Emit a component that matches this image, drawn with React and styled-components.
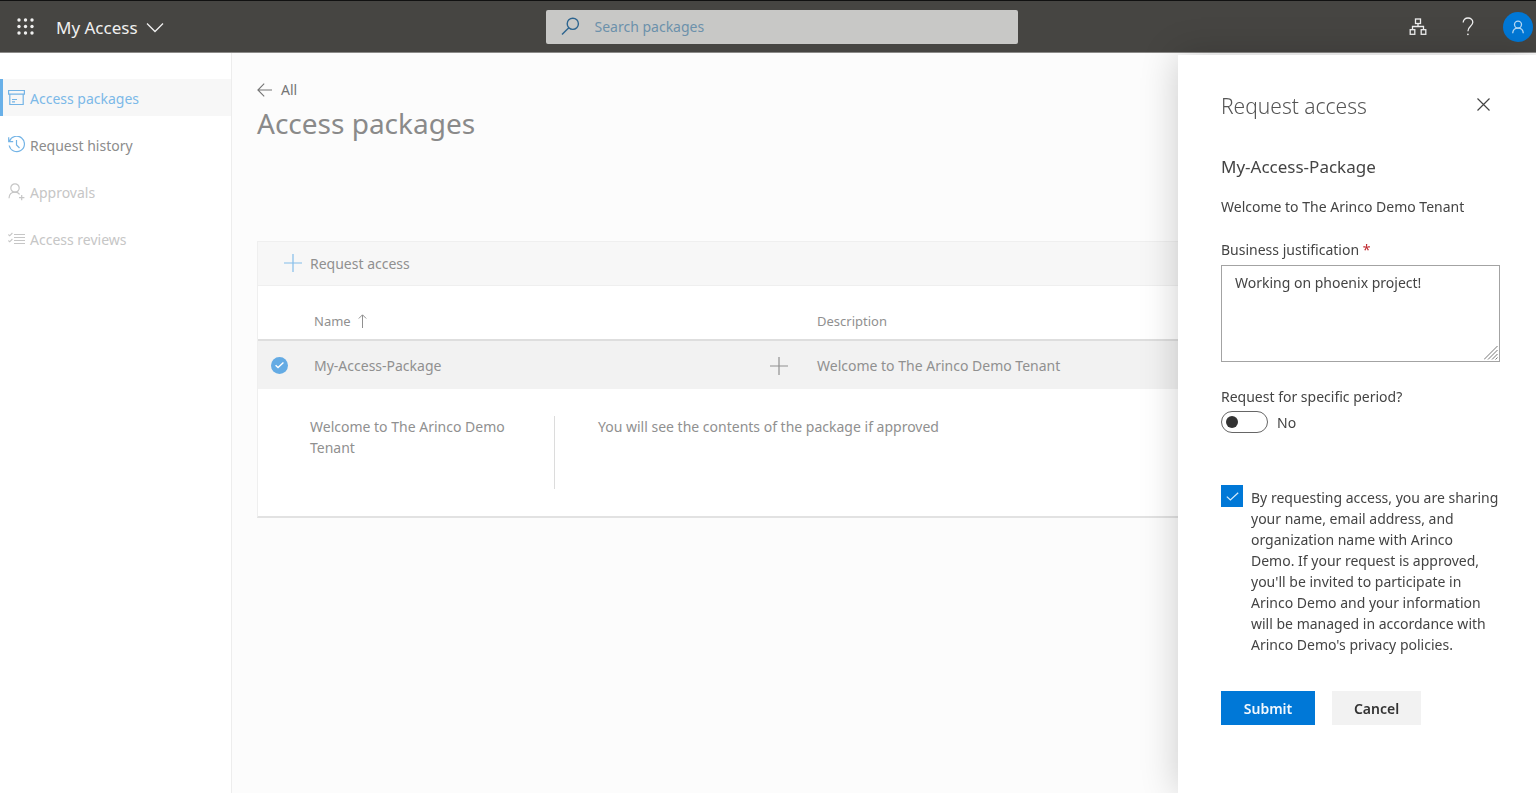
import React from "react";
import styled, { createGlobalStyle } from "styled-components";

const GlobalStyle = createGlobalStyle`
  *, *::before, *::after { box-sizing: border-box; }
  body {
    margin: 0;
    background: #fcfcfc;
    color: #444;
    font-family: "Noto Sans", "Open Sans", sans-serif;
    font-size: 14px;
    line-height: 21px;
  }
  button, input, textarea { font: inherit; color: inherit; }
  button { border: 0; padding: 0; background: none; cursor: pointer; }
  h1, h2, h3, p { margin: 0; font-weight: 400; }
  svg { display: block; fill: none; stroke: currentColor; flex: none; }
`;

const Page = styled.div`
  display: flex;
  flex-direction: column;
  min-height: 100vh;
`;

const Header = styled.header`
  display: flex;
  align-items: center;
  height: 53px;
  background: #464542;
  border-top: 1px solid #111;
  border-bottom: 1px solid #8c8b89;
  color: #f0f0f0;
`;

const Brand = styled.div`
  flex: 1 1 30px;
  display: flex;
  align-items: center;
  gap: 22px;
  padding-left: 17px;
`;

const BrandButton = styled.button`
  display: flex;
  align-items: center;
  gap: 8px;
  padding-top: 2px;
  font-size: 17px;
  line-height: 24px;
`;

const Search = styled.label`
  display: flex;
  align-items: center;
  gap: 15px;
  width: 472px;
  height: 34px;
  padding-left: 15px;
  background: #c8c8c6;
  border-radius: 2px;
  color: #2c648f;
`;

const SearchInput = styled.input`
  flex: 1;
  min-width: 0;
  height: 100%;
  padding: 0;
  border: 0;
  outline: 0;
  background: none;
  &::placeholder { color: #6c91ab; opacity: 1; }
`;

const HeaderActions = styled.div`
  flex: 1 1 0;
  display: flex;
  align-items: center;
  justify-content: flex-end;
  padding-right: 3px;
`;

const HeaderButton = styled.button`
  display: grid;
  place-items: center;
  width: 50px;
  height: 50px;
`;

const Avatar = styled.button`
  display: grid;
  place-items: center;
  width: 30px;
  height: 30px;
  margin-left: 10px;
  border-radius: 50%;
  background: #0078d7;
  color: #b5d9f5;
`;

const Body = styled.div`
  flex: 1;
  display: flex;
`;

const Nav = styled.nav`
  flex: none;
  display: flex;
  flex-direction: column;
  gap: 10px;
  width: 232px;
  padding-top: 26px;
  background: #fff;
  border-right: 1px solid #ededed;
`;

const NavLink = styled.a`
  display: flex;
  align-items: center;
  gap: 5px;
  height: 37px;
  padding-left: 5px;
  border-left: 3px solid ${(p) => (p.$selected ? "#69b0e8" : "transparent")};
  background: ${(p) => (p.$selected ? "#f7f7f7" : "transparent")};
  color: ${(p) => (p.$selected ? "#7cb9e8" : p.$disabled ? "#c6c6c6" : "#8c8c8c")};
  text-decoration: none;
  svg { color: ${(p) => (p.$disabled ? "#c6c6c6" : "#74b4e6")}; }
`;

const NavLabel = styled.span`
  padding-top: 2px;
`;

const Main = styled.main`
  flex: 1;
  min-width: 0;
  padding: 26px 26px 0 25px;
`;

const BackLink = styled.a`
  display: inline-flex;
  align-items: center;
  gap: 9px;
  color: #757575;
  text-decoration: none;
`;

const PageTitle = styled.h1`
  padding-top: 1px;
  color: #8a8a8a;
  font-size: 28px;
  line-height: 40px;
`;

const Card = styled.section`
  margin-top: 98px;
  background: #fff;
  border: 1px solid #efefef;
  border-bottom: 2px solid #e2e2e2;
  color: #909090;
`;

const Toolbar = styled.div`
  display: flex;
  align-items: center;
  height: 44px;
  padding-left: 26px;
  background: #f7f7f7;
  border-bottom: 1px solid #efefef;
`;

const ToolbarButton = styled.button`
  display: flex;
  align-items: center;
  gap: 8px;
  svg { color: #84bdea; }
`;

const Table = styled.table`
  width: 100%;
  table-layout: fixed;
  border-collapse: collapse;
  text-align: left;
`;

const Col = styled.col`
  width: ${(p) => p.$width};
`;

const HeadCell = styled.th`
  height: 54px;
  padding: 18px 0 0;
  border-bottom: 2px solid #dedede;
  font-size: 13px;
  font-weight: 400;
`;

const SortLabel = styled.span`
  display: flex;
  align-items: center;
  gap: 7px;
`;

const Cell = styled.td`
  height: 49px;
  padding: 2px 0 0;
  background: #f2f2f2;
`;

const RowAction = styled.button`
  display: flex;
`;

const RowCheck = styled.span`
  display: grid;
  place-items: center;
  width: 17px;
  height: 17px;
  margin-left: 13px;
  border-radius: 50%;
  background: #64abe4;
  color: #fff;
`;

const DetailCell = styled.td`
  padding: 27px 0;
`;

const Detail = styled.div`
  display: flex;
`;

const DetailSummary = styled.p`
  width: 297px;
  height: 73px;
  padding-left: 52px;
  padding-right: 40px;
  border-right: 1px solid #dcdcdc;
`;

const DetailNote = styled.p`
  padding-left: 43px;
`;

const Panel = styled.aside`
  position: fixed;
  top: 55px;
  right: 0;
  bottom: 0;
  width: 358px;
  padding: 36px 36px 0 43px;
  background: #fff;
  box-shadow: 0 0 36px rgba(0, 0, 0, 0.2);
`;

const PanelHeader = styled.div`
  display: flex;
  align-items: flex-start;
  justify-content: space-between;
  padding-right: 10px;
`;

const PanelTitle = styled.h2`
  color: #555;
  font-size: 21px;
  font-weight: 300;
  line-height: 30px;
`;

const CloseButton = styled.button`
  padding: 7px 0;
`;

const PackageName = styled.h3`
  margin-top: 34px;
  font-size: 17px;
  line-height: 24px;
`;

const PackageText = styled.p`
  margin-top: 17px;
`;

const FieldLabel = styled.label`
  display: block;
  margin-top: ${(p) => p.$gap};
`;

const Required = styled.span`
  color: #c0272d;
`;

const TextAreaBox = styled.div`
  position: relative;
  margin-top: 5px;
`;

const TextArea = styled.textarea`
  display: block;
  width: 100%;
  height: 97px;
  padding: 6px 13px;
  border: 1px solid #a3a3a3;
  outline: 0;
  background: #fff;
  resize: none;
`;

const Grip = styled.svg`
  position: absolute;
  right: 2px;
  bottom: 2px;
  color: #777;
`;

const ToggleRow = styled.div`
  display: flex;
  align-items: center;
  gap: 9px;
  margin-top: 4px;
`;

const Toggle = styled.input`
  appearance: none;
  display: flex;
  align-items: center;
  width: 47px;
  height: 22px;
  margin: 0;
  padding-left: 4px;
  border: 1px solid #666;
  border-radius: 11px;
  &::before {
    content: "";
    width: 12px;
    height: 12px;
    border-radius: 50%;
    background: #333;
  }
`;

const Consent = styled.label`
  display: grid;
  grid-template-columns: 22px 1fr;
  gap: 8px;
  margin-top: 52px;
`;

const CheckHolder = styled.span`
  display: grid;
  height: 22px;
  place-items: center;
  color: #d6ebfa;
  & > * { grid-area: 1 / 1; }
  svg { z-index: 1; pointer-events: none; }
`;

const CheckInput = styled.input`
  appearance: none;
  width: 22px;
  height: 22px;
  margin: 0;
  background: #0078d7;
`;

const ConsentText = styled.span`
  padding-top: 2px;
`;

const Actions = styled.div`
  display: flex;
  gap: 17px;
  margin-top: 36px;
`;

const ActionButton = styled.button`
  width: ${(p) => (p.$primary ? "94px" : "89px")};
  height: 34px;
  background: ${(p) => (p.$primary ? "#0078d7" : "#f2f2f2")};
  color: ${(p) => (p.$primary ? "#f2f8fd" : "#333")};
  font-weight: 600;
`;

const WaffleIcon = () => (
  <svg width="17" height="17" viewBox="0 0 17 17">
    {[2, 8.5, 15].map((y) =>
      [2, 8.5, 15].map((x) => (
        <circle key={`${x}-${y}`} cx={x} cy={y} r="1.7" fill="currentColor" stroke="none" />
      ))
    )}
  </svg>
);

const ChevronIcon = () => (
  <svg width="18" height="11" viewBox="0 0 18 11" strokeWidth="1.3">
    <path d="M1 1.500 9 9.500l8-8" />
  </svg>
);

const SearchIcon = () => (
  <svg width="19" height="19" viewBox="0 0 19 19" strokeWidth="1.4">
    <circle cx="11.8" cy="6.8" r="5.6" />
    <path d="M7.8 10.8 1 17.6" />
  </svg>
);

const OrgIcon = () => (
  <svg width="18" height="18" viewBox="0 0 18 18" strokeWidth="1.3">
    <rect x="6.5" y="1" width="5" height="4.5" />
    <rect x="1.2" y="11.7" width="4.6" height="4.6" />
    <rect x="12.2" y="11.7" width="4.6" height="4.6" />
    <path d="M9 5.5v3M3.5 11.7V8.500h11v3.200" />
  </svg>
);

const HelpIcon = () => (
  <svg width="12" height="19" viewBox="0 0 12 19" strokeWidth="1.3">
    <path d="M1.2 5.500C1.2 2.700 3.200 1 6 1s4.800 1.700 4.800 4.300c0 4-4.900 4.200-4.900 9" />
    <circle cx="5.9" cy="17.3" r="0.9" fill="currentColor" stroke="none" />
  </svg>
);

const PersonIcon = () => (
  <svg width="14" height="14" viewBox="0 0 14 14" strokeWidth="1.3">
    <circle cx="7" cy="4.6" r="3.5" />
    <path d="M1.700 13.200C1.900 10 4 8.100 7 8.100s5.100 1.900 5.300 5.100" />
  </svg>
);

const PackageIcon = () => (
  <svg width="17" height="17" viewBox="0 0 17 17" strokeWidth="1.2">
    <path d="M.6 1.500h15.800v3.700H.6zM1.800 5.200v10.300h13.400V5.200M4 10.500h5M4 12.800h3" />
  </svg>
);

const HistoryIcon = () => (
  <svg width="17" height="17" viewBox="0 0 17 17" strokeWidth="1.2">
    <path d="M1.500 5.300A7.700 7.700 0 1 1 1.200 9.500M.7 1.200v4.500h4.500M8.500 4v5l3 3" />
  </svg>
);

const ApprovalIcon = () => (
  <svg width="17" height="18" viewBox="0 0 17 18" strokeWidth="1.2">
    <circle cx="7" cy="5" r="4.2" />
    <path d="M1 15.200c.2-3.700 2.500-6 6-6 2 0 3.600.8 4.600 2.200M13.700 12v5.200M11 14.600h5.400" />
  </svg>
);

const ReviewIcon = () => (
  <svg width="17" height="14" viewBox="0 0 17 14" strokeWidth="1.1">
    <path d="M6 2.500h11M6 5.500h11M6 8.500h11M6 11.500h11M.4 2.500l1.300 1.300L4.400 1M.4 8.500l1.300 1.300L4.400 7" />
  </svg>
);

const BackIcon = () => (
  <svg width="15" height="14" viewBox="0 0 15 14" strokeWidth="1.1">
    <path d="M7.200.6.9 7l6.300 6.400M1 7h14" />
  </svg>
);

const PlusIcon = () => (
  <svg width="18" height="18" viewBox="0 0 18 18" strokeWidth="1.2">
    <path d="M9 0v18M0 9h18" />
  </svg>
);

const SortIcon = () => (
  <svg width="9" height="14" viewBox="0 0 9 14">
    <path d="M4.500 14V1M.8 4.500 4.500.8l3.700 3.700" />
  </svg>
);

const CheckIcon = ({ width, stroke }) => (
  <svg width={width} viewBox="0 0 13 9" strokeWidth={stroke}>
    <path d="M.8 4.600 4.400 8 12.200.8" />
  </svg>
);

const CloseIcon = () => (
  <svg width="13" height="13" viewBox="0 0 13 13" strokeWidth="1.2">
    <path d="m.5.500 12 12m0-12-12 12" />
  </svg>
);

const navItems = [
  { label: "Access packages", Icon: PackageIcon, selected: true },
  { label: "Request history", Icon: HistoryIcon },
  { label: "Approvals", Icon: ApprovalIcon, disabled: true },
  { label: "Access reviews", Icon: ReviewIcon, disabled: true },
];

export default function App() {
  return (
    <Page>
      <GlobalStyle />
      <Header>
        <Brand>
          <button type="button" aria-label="App launcher"><WaffleIcon /></button>
          <BrandButton type="button">My Access <ChevronIcon /></BrandButton>
        </Brand>
        <Search>
          <SearchIcon />
          <SearchInput type="search" placeholder="Search packages" aria-label="Search packages" />
        </Search>
        <HeaderActions>
          <HeaderButton type="button" aria-label="Organizations"><OrgIcon /></HeaderButton>
          <HeaderButton type="button" aria-label="Help"><HelpIcon /></HeaderButton>
          <Avatar type="button" aria-label="Account"><PersonIcon /></Avatar>
        </HeaderActions>
      </Header>
      <Body>
        <Nav>
          {navItems.map(({ label, Icon, selected, disabled }) => (
            <NavLink key={label} href="#" $selected={selected} $disabled={disabled}>
              <Icon />
              <NavLabel>{label}</NavLabel>
            </NavLink>
          ))}
        </Nav>
        <Main>
          <BackLink href="#"><BackIcon />All</BackLink>
          <PageTitle>Access packages</PageTitle>
          <Card>
            <Toolbar>
              <ToolbarButton type="button"><PlusIcon />Request access</ToolbarButton>
            </Toolbar>
            <Table>
              <colgroup>
                <Col $width="56px" />
                <Col $width="456px" />
                <Col $width="47px" />
                <Col $width="auto" />
              </colgroup>
              <thead>
                <tr>
                  <HeadCell />
                  <HeadCell><SortLabel>Name <SortIcon /></SortLabel></HeadCell>
                  <HeadCell />
                  <HeadCell>Description</HeadCell>
                </tr>
              </thead>
              <tbody>
                <tr>
                  <Cell><RowCheck><CheckIcon width="9" stroke="2" /></RowCheck></Cell>
                  <Cell>My-Access-Package</Cell>
                  <Cell>
                    <RowAction type="button" aria-label="Request My-Access-Package"><PlusIcon /></RowAction>
                  </Cell>
                  <Cell>Welcome to The Arinco Demo Tenant</Cell>
                </tr>
                <tr>
                  <DetailCell colSpan={4}>
                    <Detail>
                      <DetailSummary>Welcome to The Arinco Demo Tenant</DetailSummary>
                      <DetailNote>You will see the contents of the package if approved</DetailNote>
                    </Detail>
                  </DetailCell>
                </tr>
              </tbody>
            </Table>
          </Card>
        </Main>
      </Body>
      <Panel>
        <PanelHeader>
          <PanelTitle>Request access</PanelTitle>
          <CloseButton type="button" aria-label="Close"><CloseIcon /></CloseButton>
        </PanelHeader>
        <PackageName>My-Access-Package</PackageName>
        <PackageText>Welcome to The Arinco Demo Tenant</PackageText>
        <FieldLabel htmlFor="justification" $gap="22px">
          Business justification <Required>*</Required>
        </FieldLabel>
        <TextAreaBox>
          <TextArea id="justification" defaultValue="Working on phoenix project!" />
          <Grip width="14" height="14" viewBox="0 0 14 14">
            <path d="M0 13.500 13.500 0M4 13.500 13.500 4M8 13.500 13.500 8M11.500 13.500l2-2" />
          </Grip>
        </TextAreaBox>
        <FieldLabel htmlFor="period" $gap="24px">Request for specific period?</FieldLabel>
        <ToggleRow>
          <Toggle type="checkbox" role="switch" id="period" />
          <span>No</span>
        </ToggleRow>
        <Consent>
          <CheckHolder>
            <CheckInput type="checkbox" defaultChecked />
            <CheckIcon width="13" stroke="1.2" />
          </CheckHolder>
          <ConsentText>
            By requesting access, you are sharing your name, email address, and organization name
            with Arinco Demo. If your request is approved, you'll be invited to participate in
            Arinco Demo and your information will be managed in accordance with Arinco Demo's
            privacy policies.
          </ConsentText>
        </Consent>
        <Actions>
          <ActionButton type="submit" $primary>Submit</ActionButton>
          <ActionButton type="button">Cancel</ActionButton>
        </Actions>
      </Panel>
    </Page>
  );
}
